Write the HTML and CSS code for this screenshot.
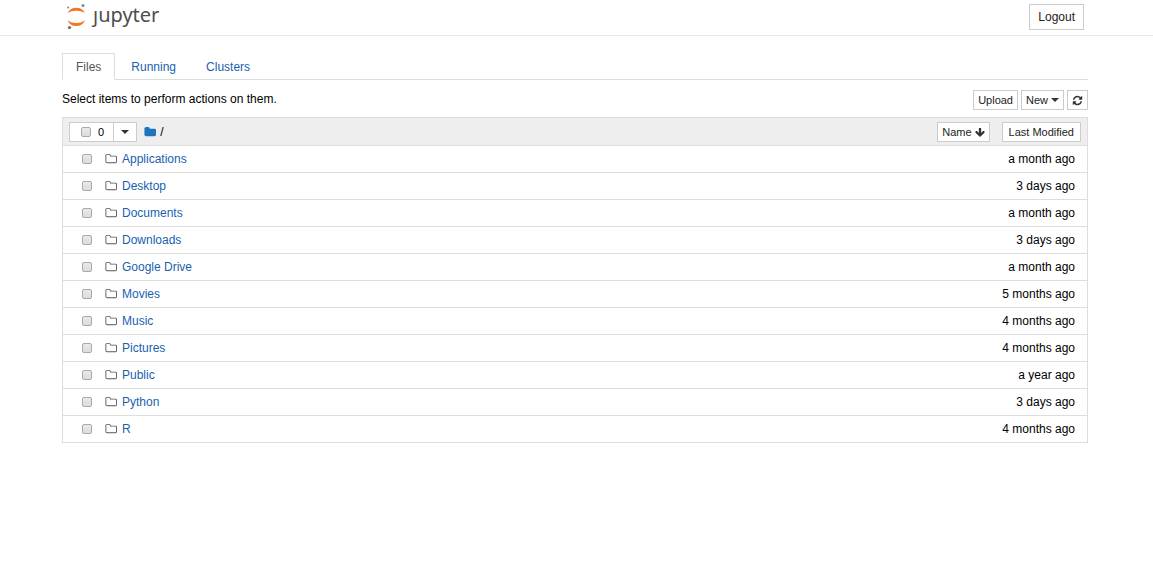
FILE: index.html
```
<!DOCTYPE html>
<html lang="en">
<head>
<meta charset="utf-8">
<title>Home</title>
<link rel="stylesheet" href="styles.css">
</head>
<body>
<svg class="sprite" aria-hidden="true">
  <symbol id="folder-o" viewBox="0 0 1728 1536" preserveAspectRatio="none"><path d="M1600 1184v-704q0-40-28-68t-68-28h-704q-40 0-68-28t-28-68v-64q0-40-28-68t-68-28h-320q-40 0-68 28t-28 68v960q0 40 28 68t68 28h1216q40 0 68-28t28-68zm128-704v704q0 92-66 158t-158 66h-1216q-92 0-158-66t-66-158v-960q0-92 66-158t158-66h320q92 0 158 66t66 158v32h672q92 0 158 66t66 158z"/></symbol>
  <symbol id="folder" viewBox="0 0 1728 1536" preserveAspectRatio="none"><path d="M1728 480v704q0 92-66 158t-158 66h-1216q-92 0-158-66t-66-158v-960q0-92 66-158t158-66h320q92 0 158 66t66 158v32h672q92 0 158 66t66 158z"/></symbol>
  <symbol id="refresh" viewBox="0 0 1792 1792"><path d="M1639 1056q0 5-1 7-64 268-268 434.500t-478 166.500q-146 0-282.500-55t-243.500-157l-129 129q-19 19-45 19t-45-19-19-45v-448q0-26 19-45t45-19h448q26 0 45 19t19 45-19 45l-137 137q71 66 161 102t187 36q134 0 250-65t186-179q11-17 53-117 8-23 30-23h192q13 0 22.500 9.500t9.500 22.500zm25-800v448q0 26-19 45t-45 19h-448q-26 0-45-19t-19-45 19-45l138-138q-148-137-349-137-134 0-250 65t-186 179q-11 17-53 117-8 23-30 23h-199q-13 0-22.500-9.500t-9.500-22.500v-7q65-268 270-434.500t480-166.500q146 0 284 55.500t245 156.500l130-129q19-19 45-19t45 19 19 45z"/></symbol>
  <symbol id="arrow-down" viewBox="64 0 1664 1792"><path d="M1675 832q0 53-37 90l-651 652q-39 37-91 37-53 0-90-37l-651-652q-38-36-38-90 0-53 38-91l74-75q39-37 91-37 53 0 90 37l294 294v-704q0-52 38-90t90-38h128q52 0 90 38t38 90v704l294-294q37-37 90-37 52 0 91 37l75 75q37 39 37 91z"/></symbol>
</svg>

<header class="header">
  <a class="logo" href="#" aria-label="jupyter">
    <svg class="logo-mark" viewBox="0 0 20 26" aria-hidden="true">
      <path class="orbit" d="M1.500 9.500C3 5.800 6 3.800 10.300 3.800S17.600 5.800 19.100 9.500C17.300 7.600 14.300 6.700 10.300 6.700S3.300 7.600 1.500 9.500z"/>
      <path class="orbit" d="M1.500 16C3 20 6 22 10.300 22S17.600 20 19.100 16C17.300 18 14.300 19 10.300 19S3.300 18 1.500 16z"/>
      <circle class="moon" cx="17" cy="1.600" r="1.400"/>
      <circle class="moon" cx="2.200" cy="3.500" r="0.900"/>
      <circle class="moon" cx="3.500" cy="23.600" r="1.700"/>
    </svg>
    <span class="logo-text">ȷupyter</span>
  </a>
  <button class="btn btn-logout" type="button">Logout</button>
</header>

<main class="page">
  <nav class="tabs">
    <a class="tab active" href="#files">Files</a>
    <a class="tab" href="#running">Running</a>
    <a class="tab" href="#clusters">Clusters</a>
  </nav>

  <div class="toolbar">
    <p class="hint">Select items to perform actions on them.</p>
    <div class="actions">
      <button class="btn btn-small" type="button">Upload</button>
      <button class="btn btn-small" type="button">New <span class="caret"></span></button>
      <button class="btn btn-small" type="button" aria-label="Refresh"><svg class="icon"><use href="#refresh"/></svg></button>
    </div>
  </div>

  <section class="browser">
    <div class="list-header">
      <div class="select-group">
        <label class="select-all"><input class="check" type="checkbox"><span>0</span></label>
        <button class="select-menu" type="button" aria-label="Select by type"><span class="caret"></span></button>
      </div>
      <div class="crumbs"><a href="#" aria-label="Root folder"><svg class="folder root"><use href="#folder"/></svg></a><span>/</span></div>
      <div class="sorting">
        <button class="btn btn-small" type="button">Name <svg class="icon arrow"><use href="#arrow-down"/></svg></button>
        <button class="btn btn-small btn-wide" type="button">Last Modified</button>
      </div>
    </div>
    <table class="files">
      <tbody>
        <tr><td class="pick"><input class="check" type="checkbox" aria-label="Applications"></td><td><a class="item" href="#"><svg class="folder"><use href="#folder-o"/></svg>Applications</a></td><td class="when">a month ago</td></tr>
        <tr><td class="pick"><input class="check" type="checkbox" aria-label="Desktop"></td><td><a class="item" href="#"><svg class="folder"><use href="#folder-o"/></svg>Desktop</a></td><td class="when">3 days ago</td></tr>
        <tr><td class="pick"><input class="check" type="checkbox" aria-label="Documents"></td><td><a class="item" href="#"><svg class="folder"><use href="#folder-o"/></svg>Documents</a></td><td class="when">a month ago</td></tr>
        <tr><td class="pick"><input class="check" type="checkbox" aria-label="Downloads"></td><td><a class="item" href="#"><svg class="folder"><use href="#folder-o"/></svg>Downloads</a></td><td class="when">3 days ago</td></tr>
        <tr><td class="pick"><input class="check" type="checkbox" aria-label="Google Drive"></td><td><a class="item" href="#"><svg class="folder"><use href="#folder-o"/></svg>Google Drive</a></td><td class="when">a month ago</td></tr>
        <tr><td class="pick"><input class="check" type="checkbox" aria-label="Movies"></td><td><a class="item" href="#"><svg class="folder"><use href="#folder-o"/></svg>Movies</a></td><td class="when">5 months ago</td></tr>
        <tr><td class="pick"><input class="check" type="checkbox" aria-label="Music"></td><td><a class="item" href="#"><svg class="folder"><use href="#folder-o"/></svg>Music</a></td><td class="when">4 months ago</td></tr>
        <tr><td class="pick"><input class="check" type="checkbox" aria-label="Pictures"></td><td><a class="item" href="#"><svg class="folder"><use href="#folder-o"/></svg>Pictures</a></td><td class="when">4 months ago</td></tr>
        <tr><td class="pick"><input class="check" type="checkbox" aria-label="Public"></td><td><a class="item" href="#"><svg class="folder"><use href="#folder-o"/></svg>Public</a></td><td class="when">a year ago</td></tr>
        <tr><td class="pick"><input class="check" type="checkbox" aria-label="Python"></td><td><a class="item" href="#"><svg class="folder"><use href="#folder-o"/></svg>Python</a></td><td class="when">3 days ago</td></tr>
        <tr><td class="pick"><input class="check" type="checkbox" aria-label="R"></td><td><a class="item" href="#"><svg class="folder"><use href="#folder-o"/></svg>R</a></td><td class="when">4 months ago</td></tr>
      </tbody>
    </table>
  </section>
</main>
</body>
</html>
```
FILE: styles.css
```
* { box-sizing: border-box; }
body {
  margin: 0;
  background: #fff;
  color: #000;
  font: 12px/18px "Helvetica Neue", "Liberation Sans", Arial, sans-serif;
}
a { color: #1a5fb0; text-decoration: none; }
button { font: inherit; cursor: pointer; }
.sprite { display: none; }

.header {
  display: flex;
  justify-content: space-between;
  align-items: flex-start;
  padding: 4px 69px 5px 66px;
  border-bottom: 1px solid #e7e7e7;
}
.logo { display: flex; align-items: flex-start; gap: 7px; }
.logo-mark { width: 20px; height: 26px; }
.logo-text { color: #4e4e4e; font: 20px/22px "Noto Sans", "Open Sans", sans-serif; }
.orbit { fill: #f37726; }
.moon { fill: #767677; }

.btn {
  display: flex;
  align-items: center;
  gap: 3px;
  border: 1px solid #ccc;
  background: #fff;
  color: #222;
}
.btn-logout { padding: 3px 8px; }
.btn-small { padding: 0 4px; font-size: 11px; }
.btn-wide { padding: 0 6px; }
.icon { width: 11px; height: 11px; fill: #333; }
.arrow { width: 10px; }
.caret {
  border: 4px solid transparent;
  border-top-color: #333;
  border-bottom: 0;
}

.page { padding: 17px 65px 0 62px; }
.tabs { display: flex; gap: 2px; border-bottom: 1px solid #ddd; }
.tab {
  margin-bottom: -1px;
  padding: 4px 13px 3px;
  border: 1px solid transparent;
}
.tab.active { border-color: #ddd #ddd #fff; color: #555; background: #fff; }

.toolbar {
  display: flex;
  justify-content: space-between;
  align-items: flex-start;
  padding: 10px 0 7px;
}
.hint { margin: 0; }
.actions { display: flex; gap: 3px; }

.browser { border: 1px solid #ddd; }
.list-header {
  display: flex;
  align-items: center;
  padding: 4px 6px 3px;
  background: #eee;
}
.select-group { display: flex; border: 1px solid #ccc; background: #fff; }
.select-all {
  display: flex;
  align-items: center;
  gap: 7px;
  padding: 0 9px 0 11px;
  font-size: 11px;
}
.select-menu {
  display: flex;
  align-items: center;
  padding: 0 7px;
  border: 0;
  border-left: 1px solid #ccc;
  background: #fff;
}
.check {
  appearance: none;
  width: 10px;
  height: 10px;
  margin: 0;
  border: 1px solid #aaa;
  border-radius: 2px;
  background: linear-gradient(#e9e9e9, #dcdcdc);
}
.crumbs { display: flex; align-items: center; gap: 4px; margin-left: 7px; }
.folder { display: block; width: 12px; height: 10px; fill: #555; }
.root { fill: #1f74bf; }
.sorting { display: flex; gap: 12px; margin-left: auto; }

.files { width: 100%; border-collapse: collapse; }
.files td { padding: 4px 0; border-top: 1px solid #ddd; }
.files .pick { width: 42px; padding-left: 19px; }
.pick .check { display: block; }
.item { display: flex; align-items: center; gap: 5px; }
.files .when { padding-right: 12px; text-align: right; }
```
